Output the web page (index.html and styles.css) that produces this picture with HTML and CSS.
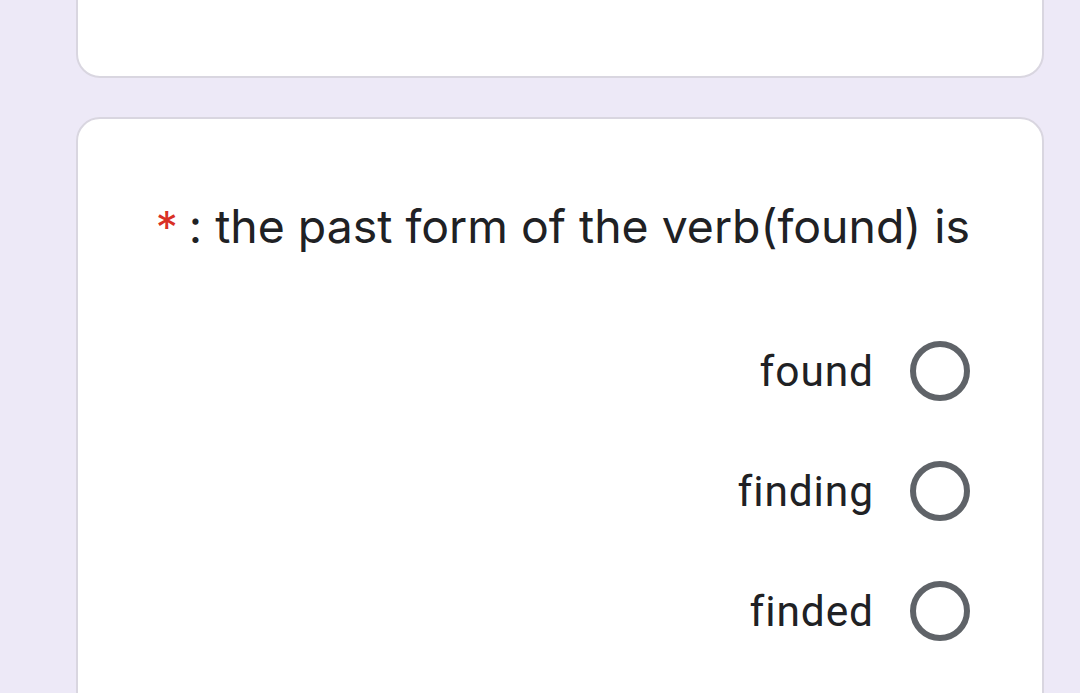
FILE: index.html
```html
<!DOCTYPE html>
<html>
<head>
<meta charset="utf-8">
<link rel="stylesheet" href="styles.css">
</head>
<body>
<div class="page">
  <div class="card card-top"></div>
  <div class="card card-question">
    <div class="question"><span class="req">*</span><span class="qtext">: the past form of the verb(found) is</span></div>
    <div class="options">
      <label class="option"><span class="opt-text">found</span><span class="radio"></span></label>
      <label class="option"><span class="opt-text">finding</span><span class="radio"></span></label>
      <label class="option"><span class="opt-text">finded</span><span class="radio"></span></label>
    </div>
  </div>
</div>
</body>
</html>
```
FILE: styles.css
```css
html, body {
  margin: 0;
  padding: 0;
  background: #ede9f7;
  overflow: hidden;
  height: 693px;
}
.page {
  padding: 0 36px 0 76px;
  display: flex;
  flex-direction: column;
  gap: 39px;
}
.card {
  background: #ffffff;
  border: 2px solid #d9d6e0;
  border-radius: 24px;
  box-sizing: border-box;
}
.card-top {
  margin-top: -60px;
  height: 138px;
}
.card-question {
  height: 700px;
  padding: 78px 72px 0 0;
}
.question {
  display: flex;
  justify-content: flex-end;
  align-items: baseline;
  font-family: Inter, "Open Sans", sans-serif;
  font-size: 46.4px;
  color: #202124;
  line-height: 58px;
}
.req {
  color: #d93025;
  margin-right: 11px;
  font-size: 44px;
}
.options {
  margin-top: 85px;
  display: flex;
  flex-direction: column;
  gap: 60px;
}
.option {
  display: flex;
  justify-content: flex-end;
  align-items: center;
  gap: 36px;
  height: 60px;
}
.opt-text {
  font-family: Roboto, "Liberation Sans", sans-serif;
  font-size: 42.5px;
  color: #202124;
  letter-spacing: 0.9px;
}
.radio {
  width: 60px;
  height: 60px;
  box-sizing: border-box;
  border: 6px solid #5f6368;
  border-radius: 50%;
}
```
